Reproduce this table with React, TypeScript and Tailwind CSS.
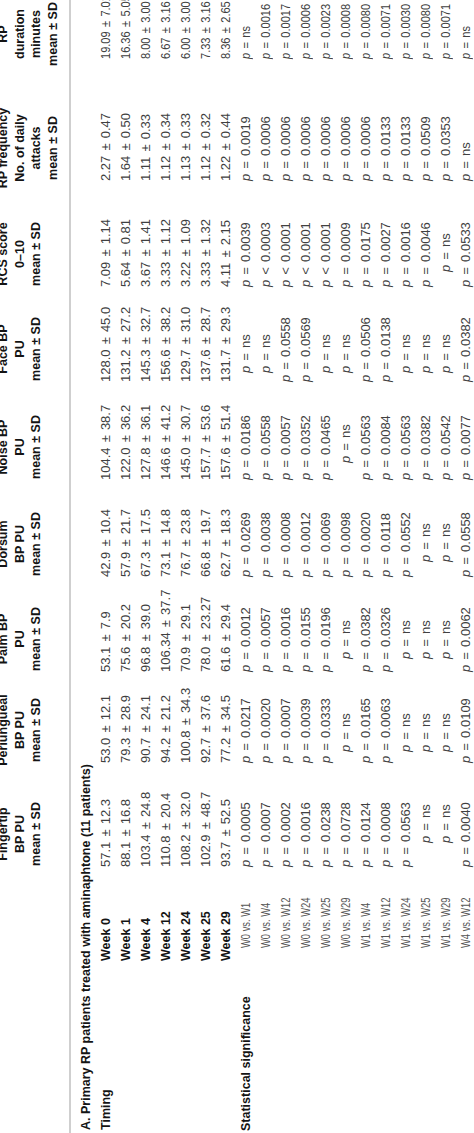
import React from "react";

type Col = {
  w: string;
  hdr: string[];
  hdrShift: string;
  nsPad: string;
  squeeze: boolean;
  vals: string[];
  ps: string[];
};

const cols: Col[] = [
  {
    w: "w-[104px]",
    hdr: ["Fingertip", "BP PU", "mean ± SD"],
    hdrShift: "ml-0",
    nsPad: "pl-[24px]",
    squeeze: false,
    vals: ["57.1 ± 12.3", "88.1 ± 16.8", "103.4 ± 24.8", "110.8 ± 20.4", "108.2 ± 32.0", "102.9 ± 48.7", "93.7 ± 52.5"],
    ps: ["=0.0005", "=0.0007", "=0.0002", "=0.0016", "=0.0238", "=0.0728", "=0.0124", "=0.0008", "=0.0563", "ns", "ns", "=0.0040"],
  },
  {
    w: "w-[91px]",
    hdr: ["Periungueal", "BP PU", "mean ± SD"],
    hdrShift: "ml-0",
    nsPad: "pl-[11px]",
    squeeze: false,
    vals: ["53.0 ± 12.1", "79.3 ± 28.9", "90.7 ± 24.1", "94.2 ± 21.2", "100.8 ± 34.3", "92.7 ± 37.6", "77.2 ± 34.5"],
    ps: ["=0.0217", "=0.0020", "=0.0007", "=0.0039", "=0.0333", "ns", "=0.0165", "=0.0063", "ns", "ns", "ns", "=0.0109"],
  },
  {
    w: "w-[95px]",
    hdr: ["Palm BP", "PU", "mean ± SD"],
    hdrShift: "ml-0",
    nsPad: "pl-[13px]",
    squeeze: false,
    vals: ["53.1 ± 7.9", "75.6 ± 20.2", "96.8 ± 39.0", "106.34 ± 37.7", "70.9 ± 29.1", "78.0 ± 23.27", "61.6 ± 29.4"],
    ps: ["=0.0012", "=0.0057", "=0.0016", "=0.0155", "=0.0196", "ns", "=0.0382", "=0.0326", "ns", "ns", "ns", "=0.0062"],
  },
  {
    w: "w-[97px]",
    hdr: ["Dorsum", "BP PU", "mean ± SD"],
    hdrShift: "ml-0",
    nsPad: "pl-[15px]",
    squeeze: false,
    vals: ["42.9 ± 10.4", "57.9 ± 21.7", "67.3 ± 17.5", "73.1 ± 14.8", "76.7 ± 23.8", "66.8 ± 19.7", "62.7 ± 18.3"],
    ps: ["=0.0269", "=0.0038", "=0.0008", "=0.0012", "=0.0069", "=0.0098", "=0.0020", "=0.0118", "=0.0552", "ns", "ns", "=0.0558"],
  },
  {
    w: "w-[98px]",
    hdr: ["Noise BP", "PU", "mean ± SD"],
    hdrShift: "ml-0",
    nsPad: "pl-[17px]",
    squeeze: false,
    vals: ["104.4 ± 38.7", "122.0 ± 36.2", "127.8 ± 36.1", "146.6 ± 41.2", "145.0 ± 30.7", "157.7 ± 53.6", "157.6 ± 51.4"],
    ps: ["=0.0186", "=0.0558", "=0.0057", "=0.0352", "=0.0465", "ns", "=0.0563", "=0.0084", "=0.0563", "=0.0382", "=0.0542", "=0.0077"],
  },
  {
    w: "w-[95px]",
    hdr: ["Face BP", "PU", "mean ± SD"],
    hdrShift: "ml-0",
    nsPad: "pl-[9px]",
    squeeze: false,
    vals: ["128.0 ± 45.0", "131.2 ± 27.2", "145.3 ± 32.7", "156.6 ± 38.2", "129.7 ± 31.0", "137.6 ± 28.7", "131.7 ± 29.3"],
    ps: ["ns", "ns", "=0.0558", "=0.0569", "ns", "ns", "=0.0506", "=0.0138", "ns", "ns", "ns", "=0.0382"],
  },
  {
    w: "w-[106px]",
    hdr: ["RCS score", "0–10", "mean ± SD"],
    hdrShift: "ml-0",
    nsPad: "pl-[15px]",
    squeeze: false,
    vals: ["7.09 ± 1.14", "5.64 ± 0.81", "3.67 ± 1.41", "3.33 ± 1.12", "3.22 ± 1.09", "3.33 ± 1.32", "4.11 ± 2.15"],
    ps: ["=0.0039", "<0.0003", "<0.0001", "<0.0001", "<0.0001", "=0.0009", "=0.0175", "=0.0027", "=0.0016", "=0.0046", "ns", "=0.0533"],
  },
  {
    w: "w-[122px]",
    hdr: ["RP frequency", "No. of daily", "attacks", "mean ± SD"],
    hdrShift: "ml-0",
    nsPad: "pl-0",
    squeeze: false,
    vals: ["2.27 ± 0.47", "1.64 ± 0.50", "1.11 ± 0.33", "1.12 ± 0.34", "1.13 ± 0.33", "1.12 ± 0.32", "1.22 ± 0.44"],
    ps: ["=0.0019", "=0.0006", "=0.0006", "=0.0006", "=0.0006", "=0.0006", "=0.0006", "=0.0133", "=0.0133", "=0.0509", "=0.0353", "ns"],
  },
  {
    w: "w-[59px]",
    hdr: ["RP", "duration", "minutes", "mean ± SD"],
    hdrShift: "ml-[-8px]",
    nsPad: "pl-0",
    squeeze: true,
    vals: ["19.09 ± 7.01", "16.36 ± 5.05", "8.00 ± 3.00", "6.67 ± 3.16", "6.00 ± 3.00", "7.33 ± 3.16", "8.36 ± 2.65"],
    ps: ["ns", "=0.0016", "=0.0017", "=0.0006", "=0.0023", "=0.0008", "=0.0080", "=0.0071", "=0.0030", "=0.0080", "=0.0071", "ns"],
  },
];

const weeks = ["Week 0", "Week 1", "Week 4", "Week 12", "Week 24", "Week 25", "Week 29"];
const comps = [
  "W0 vs. W1",
  "W0 vs. W4",
  "W0 vs. W12",
  "W0 vs. W24",
  "W0 vs. W25",
  "W0 vs. W29",
  "W1 vs. W4",
  "W1 vs. W12",
  "W1 vs. W24",
  "W1 vs. W25",
  "W1 vs. W29",
  "W4 vs. W12",
];

function PVal({ v }: { v: string }) {
  if (v === "ns") {
    return (
      <>
        <i>p</i> = ns
      </>
    );
  }
  return (
    <>
      <i>p</i> {v[0]} {v.slice(1)}
    </>
  );
}

function Cell({ squeeze, children }: { squeeze: boolean; children: React.ReactNode }) {
  if (!squeeze) return <>{children}</>;
  return <span className="inline-block origin-left scale-x-[0.85]">{children}</span>;
}

export default function App() {
  return (
    <div className="relative w-[474px] h-[1133px] overflow-hidden bg-white">
      <div className="absolute left-0 top-0 w-[1133px] h-[474px] origin-top-left [transform:translateY(1133px)_rotate(-90deg)] font-['Liberation_Sans',Arial,sans-serif] whitespace-nowrap">
        {/* column headings */}
        <div className="flex h-[69px] items-start">
          <div className="w-[266px] shrink-0" />
          {cols.map((c, i) => (
            <div key={i} className={`${c.w} shrink-0`}>
              <div
                className={`${c.hdrShift} -mt-[5px] flex w-[66px] flex-col items-center text-[12.5px] font-bold leading-[16.5px] text-[#141414]`}
              >
                {c.hdr.map((l, j) => (
                  <span key={j}>{l}</span>
                ))}
              </div>
            </div>
          ))}
        </div>
        <div className="h-[2px] bg-[#cfcfcf]" />
        <div className="pt-[5px]">
          <div className="flex h-[20px] items-center pl-[3px] text-[12.5px] font-bold text-[#141414]">
            A. Primary RP patients treated with aminaphtone (11 patients)
          </div>
          {weeks.map((w, r) => (
            <div key={w} className="flex h-[20px] items-center">
              <div className="flex w-[266px] shrink-0 items-center text-[12.5px] font-bold text-[#141414]">
                <div className="w-[172px] shrink-0 pl-[3px]">{r === 0 ? "Timing" : ""}</div>
                <div>{w}</div>
              </div>
              {cols.map((c, i) => (
                <div key={i} className={`${c.w} shrink-0 text-[13px] text-[#404040] [word-spacing:1.5px]`}>
                  <Cell squeeze={c.squeeze}>{c.vals[r]}</Cell>
                </div>
              ))}
            </div>
          ))}
          {comps.map((w, r) => (
            <div key={w} className="flex h-[20px] items-center">
              <div className="flex w-[266px] shrink-0 items-center">
                <div className="w-[172px] shrink-0 pl-[2px] text-[12.5px] font-bold text-[#141414]">
                  {r === 0 ? "Statistical significance" : ""}
                </div>
                <div className="pl-[13px] text-[13px] text-[#555555]">
                  <span className="inline-block origin-left scale-x-[0.72]">{w}</span>
                </div>
              </div>
              {cols.map((c, i) => (
                <div
                  key={i}
                  className={`${c.w} shrink-0 text-[13px] text-[#404040] [word-spacing:1.5px] ${c.ps[r] === "ns" ? c.nsPad : ""}`}
                >
                  <Cell squeeze={c.squeeze}>
                    <PVal v={c.ps[r]} />
                  </Cell>
                </div>
              ))}
            </div>
          ))}
        </div>
      </div>
    </div>
  );
}
